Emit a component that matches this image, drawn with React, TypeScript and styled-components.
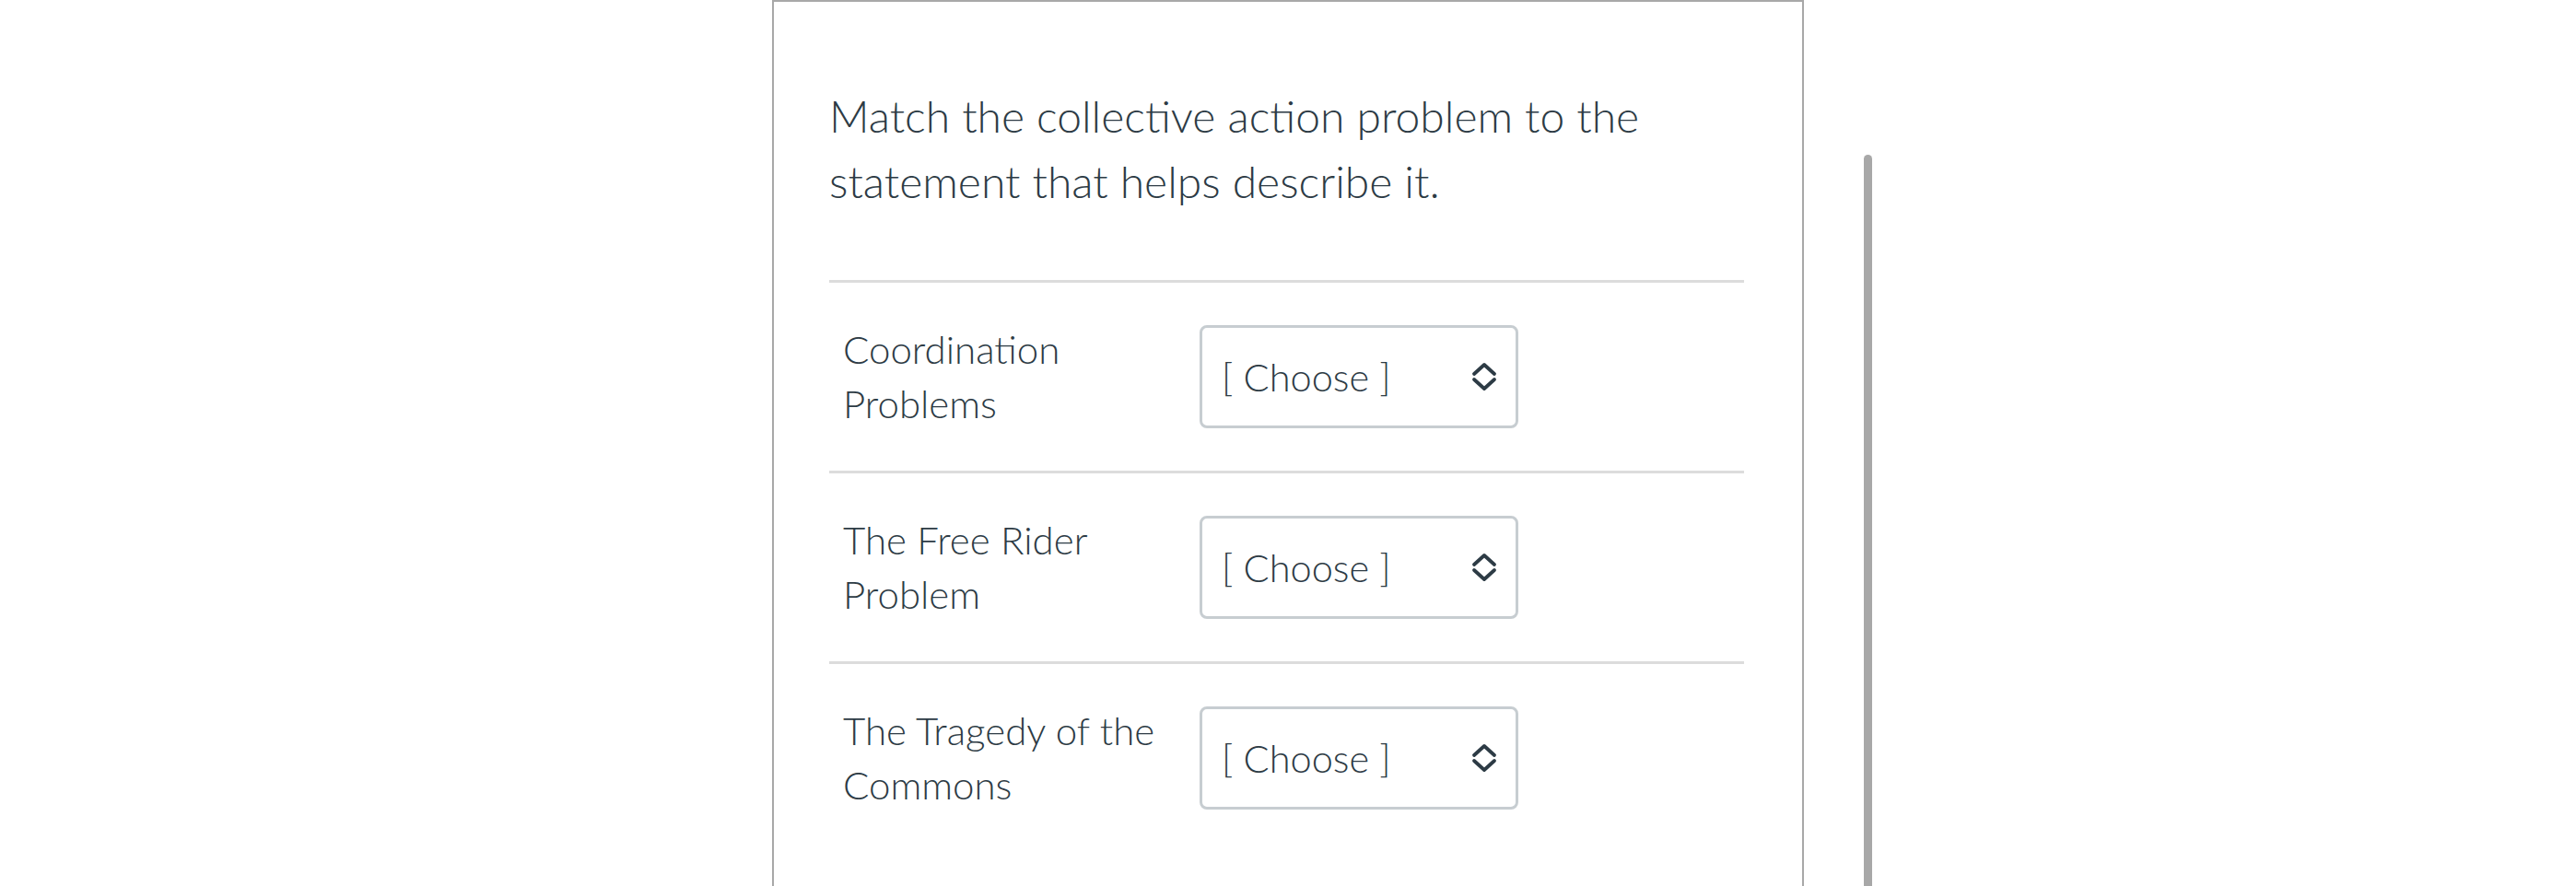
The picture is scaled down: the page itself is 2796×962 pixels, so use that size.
import React from "react";
import styled, { createGlobalStyle } from "styled-components";

const GlobalStyle = createGlobalStyle`
  html, body {
    margin: 0;
    padding: 0;
    background: #ffffff;
    overflow: hidden;
  }
  body {
    font-family: Lato, "Open Sans", "Liberation Sans", sans-serif;
    color: #2d3b45;
  }
`;

const Page = styled.div`
  position: relative;
  height: 962px;
  display: flex;
  justify-content: center;
`;

const Card = styled.div`
  box-sizing: border-box;
  width: 1120px;
  height: 1200px;
  border: 2px solid #a8a8a8;
  border-bottom: none;
  padding: 88px 63px 0 60px;
`;

const Question = styled.p`
  margin: 0;
  font-size: 48px;
  font-weight: 300;
  line-height: 71px;
`;

const MatchList = styled.div`
  margin-top: 72px;
  border-top: 3px solid #dcdcdc;
`;

const Row = styled.div`
  display: flex;
  align-items: center;
  height: 204px;
  &:not(:last-child) {
    border-bottom: 3px solid #dcdcdc;
  }
`;

const Label = styled.div`
  box-sizing: border-box;
  width: 402px;
  padding: 0 24px 0 15px;
  font-size: 42px;
  font-weight: 300;
  line-height: 59px;
`;

const SelectBox = styled.div`
  box-sizing: border-box;
  width: 346px;
  height: 112px;
  border: 3px solid #c7cdd1;
  border-radius: 8px;
  display: flex;
  align-items: center;
  justify-content: space-between;
  padding: 0 20px 0 21px;
  font-size: 41.5px;
  font-weight: 300;
  cursor: pointer;
`;

const Thumb = styled.div`
  position: absolute;
  left: calc(50% + 625px);
  top: 168px;
  bottom: 0;
  width: 9px;
  background: #a8a8a8;
  border-radius: 5px 5px 0 0;
`;

function UpDown() {
  return (
    <svg width="28" height="32" viewBox="0 0 28 32" fill="none">
      <path
        d="M3 13 L14 3 L25 13 M3 19 L14 29 L25 19"
        stroke="#2d3b45"
        strokeWidth="3.8"
        strokeLinecap="round"
        strokeLinejoin="round"
      />
    </svg>
  );
}

const items = [
  "Coordination Problems",
  "The Free Rider Problem",
  "The Tragedy of the Commons",
];

export default function App() {
  return (
    <>
      <GlobalStyle />
      <Page>
        <Card>
          <Question>
            Match the collective action problem to the statement that helps
            describe it.
          </Question>
          <MatchList>
            {items.map((item) => (
              <Row key={item}>
                <Label>{item}</Label>
                <SelectBox role="combobox" aria-label={item}>
                  <span>[ Choose ]</span>
                  <UpDown />
                </SelectBox>
              </Row>
            ))}
          </MatchList>
        </Card>
        <Thumb />
      </Page>
    </>
  );
}
